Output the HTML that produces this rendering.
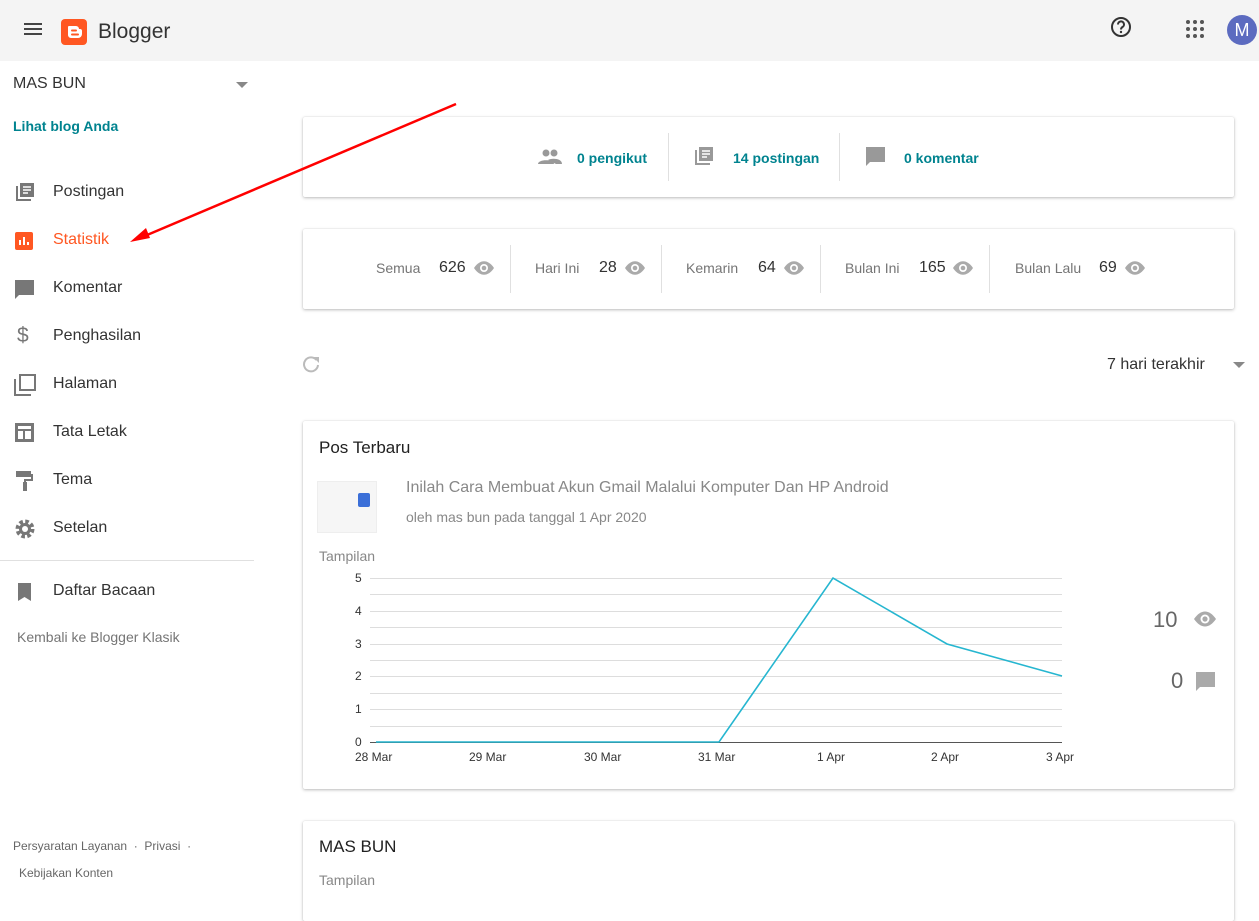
<!DOCTYPE html>
<html><head><meta charset="utf-8"><style>
*{margin:0;padding:0;box-sizing:border-box}
body{width:1259px;height:905px;overflow:hidden;background:#fff;font-family:"Liberation Sans",Arial,sans-serif;color:#212121;position:relative}
.abs{position:absolute}
.top{left:0;top:0;width:1259px;height:61px;background:#f4f4f4}
.card{position:absolute;left:303px;width:931px;background:#fff;box-shadow:0 1px 3px rgba(0,0,0,.25),0 0 1px rgba(0,0,0,.15);border-radius:2px}
.nav{position:absolute;left:53px;font-size:16px;color:#333}
.ico{position:absolute;left:14px}
.teal{color:#00838f;font-weight:bold;font-size:14px}
.st{font-size:14px;color:#757575}
.num{font-size:16px;color:#333}
.sep{position:absolute;width:1px;background:#e0e0e0}
.ax{position:absolute;font-size:12px;color:#333}
</style></head><body>
<div class="abs top"></div>
<div class="abs" style="left:24px;top:23px;width:18px;height:2px;background:#444;box-shadow:0 5px 0 #444,0 10px 0 #444"></div>
<svg class="abs" style="left:61px;top:19px" width="26" height="26"><rect width="26" height="26" rx="4" fill="#ff5722"/><path d="M8 7h7a3 3 0 0 1 3 3v0h1a2 2 0 0 1 2 2v3a4 4 0 0 1-4 4H10a3 3 0 0 1-3-3V8a1 1 0 0 1 1-1z" fill="#fff"/><rect x="10" y="10.5" width="6" height="2" rx="1" fill="#ff5722"/><rect x="10" y="14.5" width="8" height="2" rx="1" fill="#ff5722"/></svg>
<div class="abs" style="left:98px;top:20px;font-size:21px;color:#333">Blogger</div>
<svg class="abs" style="left:1110px;top:16px" width="22" height="22"><circle cx="11" cy="11" r="9" fill="none" stroke="#333" stroke-width="2"/><path d="M8 8.5a3 3 0 1 1 4.5 2.5c-1 .6-1.5 1.2-1.5 2.5" fill="none" stroke="#333" stroke-width="2"/><circle cx="11" cy="16" r="1.2" fill="#333"/></svg>
<svg class="abs" style="left:1186px;top:20px" width="18" height="18"><g fill="#555"><circle cx="2" cy="2" r="2"/><circle cx="9" cy="2" r="2"/><circle cx="16" cy="2" r="2"/><circle cx="2" cy="9" r="2"/><circle cx="9" cy="9" r="2"/><circle cx="16" cy="9" r="2"/><circle cx="2" cy="16" r="2"/><circle cx="9" cy="16" r="2"/><circle cx="16" cy="16" r="2"/></g></svg>
<div class="abs" style="left:1227px;top:15px;width:30px;height:30px;border-radius:50%;background:#5c6bc0;color:#fff;font-size:18px;text-align:center;line-height:30px">M</div>

<div class="abs" style="left:13px;top:75px;font-size:16px;color:#333">MAS BUN</div>
<div class="abs" style="left:236px;top:82px;border:6px solid transparent;border-top-color:#888"></div>
<div class="abs teal" style="left:13px;top:118px;font-size:14px">Lihat blog Anda</div>

<svg class="ico" style="top:181px" width="22" height="22"><path d="M2 5v15h15v-2H4V5z M6 2h14v14H6z" fill="#777"/><path d="M9 6h8M9 9h8M9 12h5" stroke="#fff" stroke-width="1.6"/></svg>
<div class="nav" style="top:183px">Postingan</div>
<svg class="ico" style="top:231px" width="20" height="20"><rect x="1" y="1" width="18" height="18" rx="2" fill="#ff5722"/><path d="M6 14V9M10 14V6M14 14v-3" stroke="#fff" stroke-width="2"/></svg>
<div class="nav" style="top:231px;color:#ff5722">Statistik</div>
<svg class="ico" style="top:279px" width="22" height="22"><path d="M1 1h19v15H5l-4 4z" fill="#777"/></svg>
<div class="nav" style="top:279px">Komentar</div>
<div class="abs" style="left:17px;top:324px;font-size:21px;color:#777">$</div>
<div class="nav" style="top:327px">Penghasilan</div>
<svg class="ico" style="top:374px" width="22" height="22"><path d="M1 5v16h16" stroke="#777" stroke-width="2" fill="none"/><rect x="6" y="1" width="15" height="15" stroke="#777" stroke-width="2" fill="none"/></svg>
<div class="nav" style="top:375px">Halaman</div>
<svg class="ico" style="top:422px" width="22" height="22"><rect x="1" y="1" width="19" height="19" fill="#777"/><rect x="4" y="4" width="13" height="3" fill="#fff"/><rect x="4" y="9" width="5" height="8" fill="#fff"/><rect x="11" y="9" width="6" height="8" fill="#fff"/></svg>
<div class="nav" style="top:423px">Tata Letak</div>
<svg class="ico" style="top:470px" width="22" height="22"><path d="M2 1h15v6H2z" fill="#777"/><path d="M18 4v6h-7v3" stroke="#777" stroke-width="2" fill="none"/><rect x="9" y="12" width="4" height="9" fill="#777"/></svg>
<div class="nav" style="top:471px">Tema</div>
<svg class="ico" style="top:518px" width="22" height="22"><circle cx="11" cy="11" r="7" fill="none" stroke="#777" stroke-width="5" stroke-dasharray="3.3 2.2"/><circle cx="11" cy="11" r="6" fill="#777"/><circle cx="11" cy="11" r="3" fill="#fff"/></svg>
<div class="nav" style="top:519px">Setelan</div>
<div class="abs" style="left:0;top:560px;width:254px;height:1px;background:#e0e0e0"></div>
<svg class="ico" style="top:582px;left:17px" width="16" height="20"><path d="M1 1h13v18l-6.5-4L1 19z" fill="#777"/></svg>
<div class="nav" style="top:582px">Daftar Bacaan</div>
<div class="abs" style="left:17px;top:629px;font-size:14px;color:#757575">Kembali ke Blogger Klasik</div>
<div class="abs" style="left:13px;top:839px;font-size:12px;color:#666">Persyaratan Layanan &nbsp;·&nbsp; Privasi &nbsp;·</div>
<div class="abs" style="left:19px;top:866px;font-size:12px;color:#666">Kebijakan Konten</div>

<div class="card" style="top:117px;height:80px">
 <svg class="abs" style="left:235px;top:32px" width="24" height="16"><circle cx="8" cy="4" r="3.5" fill="#999"/><circle cx="16" cy="4" r="3.5" fill="#999"/><path d="M0 15c0-5 16-5 16 0zM10 11c3-2 14-2 14 4h-6" fill="#999"/></svg>
 <div class="abs teal" style="left:274px;top:33px">0 pengikut</div>
 <div class="sep" style="left:365px;top:16px;height:48px"></div>
 <svg class="abs" style="left:390px;top:28px" width="22" height="22"><path d="M2 5v15h15v-2H4V5z M6 2h14v14H6z" fill="#999"/><path d="M9 6h8M9 9h8M9 12h5" stroke="#fff" stroke-width="1.6"/></svg>
 <div class="abs teal" style="left:430px;top:33px">14 postingan</div>
 <div class="sep" style="left:536px;top:16px;height:48px"></div>
 <svg class="abs" style="left:562px;top:29px" width="22" height="22"><path d="M1 1h19v15H5l-4 4z" fill="#999"/></svg>
 <div class="abs teal" style="left:601px;top:33px">0 komentar</div>
</div>

<div class="card" style="top:229px;height:80px">
 <div class="abs st" style="left:73px;top:31px">Semua</div><div class="abs num" style="left:136px;top:30px">626</div>
 <div class="abs st" style="left:232px;top:31px">Hari Ini</div><div class="abs num" style="left:296px;top:30px">28</div>
 <div class="abs st" style="left:383px;top:31px">Kemarin</div><div class="abs num" style="left:455px;top:30px">64</div>
 <div class="abs st" style="left:542px;top:31px">Bulan Ini</div><div class="abs num" style="left:616px;top:30px">165</div>
 <div class="abs st" style="left:712px;top:31px">Bulan Lalu</div><div class="abs num" style="left:796px;top:30px">69</div>
 <div class="sep" style="left:207px;top:16px;height:48px"></div>
 <div class="sep" style="left:358px;top:16px;height:48px"></div>
 <div class="sep" style="left:517px;top:16px;height:48px"></div>
 <div class="sep" style="left:686px;top:16px;height:48px"></div>
 <svg class="abs" style="left:0;top:0" width="931" height="80"><g fill="#aaa"><g id="e"><path d="M171 39c6-9 14-9 20 0c-6 9-14 9-20 0z"/><circle cx="181" cy="39" r="4" fill="#fff"/><circle cx="181" cy="39" r="2.3"/></g><use href="#e" x="151"/><use href="#e" x="310"/><use href="#e" x="479"/><use href="#e" x="651"/></g></svg>
</div>

<svg class="abs" style="left:302px;top:355px" width="18" height="18"><path d="M14.5 5A7 7 0 1 0 16 10" stroke="#bbb" stroke-width="2" fill="none"/><path d="M11 2h6v6z" fill="#bbb"/></svg>
<div class="abs" style="left:1107px;top:356px;font-size:16px;color:#333">7 hari terakhir</div>
<div class="abs" style="left:1233px;top:362px;border:6px solid transparent;border-top-color:#888"></div>

<div class="card" style="top:421px;height:368px">
 <div class="abs" style="left:16px;top:17px;font-size:17px;color:#212121">Pos Terbaru</div>
 <div class="abs" style="left:14px;top:60px;width:60px;height:52px;background:#f6f6f6;border:1px solid #eee"></div>
 <div class="abs" style="left:55px;top:72px;width:12px;height:14px;background:#3b6fd8;border-radius:2px"></div>
 <div class="abs" style="left:103px;top:58px;font-size:16px;color:#888">Inilah Cara Membuat Akun Gmail Malalui Komputer Dan HP Android</div>
 <div class="abs" style="left:103px;top:88px;font-size:14px;color:#888">oleh mas bun pada tanggal 1 Apr 2020</div>
 <div class="abs" style="left:16px;top:127px;font-size:14px;color:#888">Tampilan</div>
 <div class="abs" style="left:850px;top:186px;font-size:22px;color:#666">10</div>
 <svg class="abs" style="left:890px;top:190px" width="24" height="16"><path d="M1 8c7-10 15-10 22 0c-7 10-15 10-22 0z" fill="#aaa"/><circle cx="12" cy="8" r="4.5" fill="#fff"/><circle cx="12" cy="8" r="2.6" fill="#aaa"/></svg>
 <div class="abs" style="left:868px;top:247px;font-size:22px;color:#666">0</div>
 <svg class="abs" style="left:892px;top:250px" width="22" height="22"><path d="M1 1h19v15H5l-4 4z" fill="#aaa"/></svg>
</div>
<svg class="abs" style="left:0;top:0" width="1259" height="905">
<g stroke="#ddd" stroke-width="1">
<line x1="370" x2="1062" y1="578.5" y2="578.5"/><line x1="370" x2="1062" y1="594.5" y2="594.5"/><line x1="370" x2="1062" y1="611.5" y2="611.5"/><line x1="370" x2="1062" y1="627.5" y2="627.5"/><line x1="370" x2="1062" y1="644.5" y2="644.5"/><line x1="370" x2="1062" y1="660.5" y2="660.5"/><line x1="370" x2="1062" y1="676.5" y2="676.5"/><line x1="370" x2="1062" y1="693.5" y2="693.5"/><line x1="370" x2="1062" y1="709.5" y2="709.5"/><line x1="370" x2="1062" y1="726.5" y2="726.5"/></g>
<line x1="370" x2="1062" y1="742.5" y2="742.5" stroke="#555"/>
<polyline points="376,742 490,742 605,742 719,742 833,578 947,644 1062,676" fill="none" stroke="#26b6d0" stroke-width="1.6"/>
</svg>
<div class="ax" style="left:355px;top:571px">5</div><div class="ax" style="left:355px;top:604px">4</div><div class="ax" style="left:355px;top:637px">3</div><div class="ax" style="left:355px;top:669px">2</div><div class="ax" style="left:355px;top:702px">1</div><div class="ax" style="left:355px;top:735px">0</div>
<div class="ax" style="left:355px;top:750px">28 Mar</div><div class="ax" style="left:469px;top:750px">29 Mar</div><div class="ax" style="left:584px;top:750px">30 Mar</div><div class="ax" style="left:698px;top:750px">31 Mar</div><div class="ax" style="left:817px;top:750px">1 Apr</div><div class="ax" style="left:931px;top:750px">2 Apr</div><div class="ax" style="left:1046px;top:750px">3 Apr</div>

<div class="card" style="top:821px;height:100px">
 <div class="abs" style="left:16px;top:16px;font-size:17px;color:#212121">MAS BUN</div>
 <div class="abs" style="left:16px;top:51px;font-size:14px;color:#888">Tampilan</div>
</div>

<svg class="abs" style="left:0;top:0;pointer-events:none" width="1259" height="905"><line x1="456" y1="104" x2="140" y2="238" stroke="#f00" stroke-width="2.5"/><path d="M130 242l16-14 4 10z" fill="#f00"/></svg>
</body></html>
